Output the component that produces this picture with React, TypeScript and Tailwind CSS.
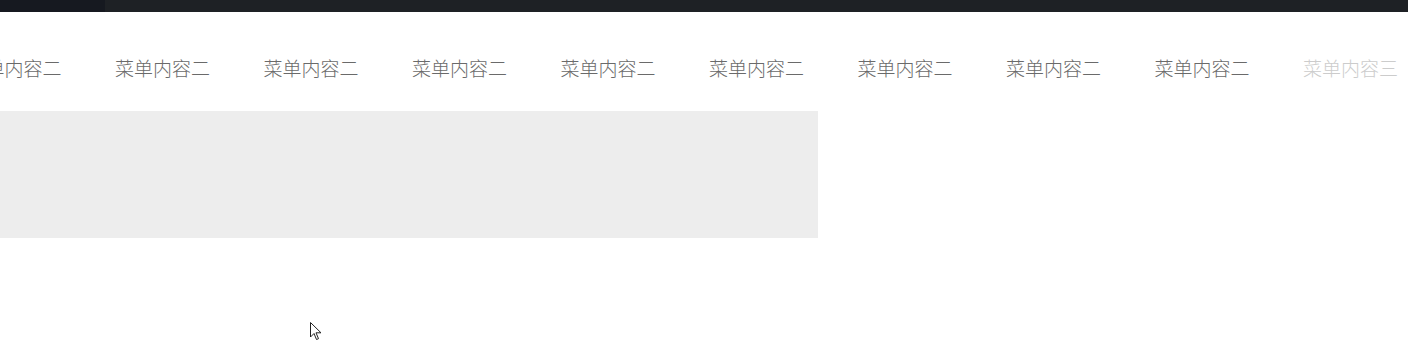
import React from 'react'

const items = [
  '菜单内容二', '菜单内容二', '菜单内容二', '菜单内容二', '菜单内容二',
  '菜单内容二', '菜单内容二', '菜单内容二', '菜单内容二',
]

export default function App() {
  return (
    <div
      className="relative h-[348px] w-[1408px] overflow-hidden bg-white"
      style={{ fontFamily: '"Noto Sans CJK SC", "Noto Sans", sans-serif' }}
    >
      {/* top dark strip */}
      <div className="flex h-3">
        <div className="w-[105px] bg-[#161920]" />
        <div className="flex-1 bg-[#1e2125]" />
      </div>

      {/* menu row, scrolled so the first item is partly hidden */}
      <div className="h-[99px] overflow-hidden">
        <div className="ml-[-33.5px] flex whitespace-nowrap pt-[43px]">
          {items.map((t, i) => (
            <span key={i} className="w-[148.5px] shrink-0 text-[19px] font-light leading-[26px] text-[#6a6a6a]">
              {t}
            </span>
          ))}
          <span className="w-[148.5px] shrink-0 text-[19px] font-light leading-[26px] text-[#cccccc]">菜单内容三</span>
        </div>
      </div>

      {/* grey block */}
      <div className="h-[127px] w-[818px] bg-[#ededed]" />

      {/* mouse cursor */}
      <svg className="absolute left-[310px] top-[322px]" width="12" height="19" viewBox="0 0 12 19">
        <path d="M0.5 0.5 L0.5 15 L4 11.5 L6.5 17.5 L8.5 16.7 L6 10.8 L11 10.8 Z" fill="#fff" stroke="#222" strokeWidth="1" />
      </svg>
    </div>
  )
}
